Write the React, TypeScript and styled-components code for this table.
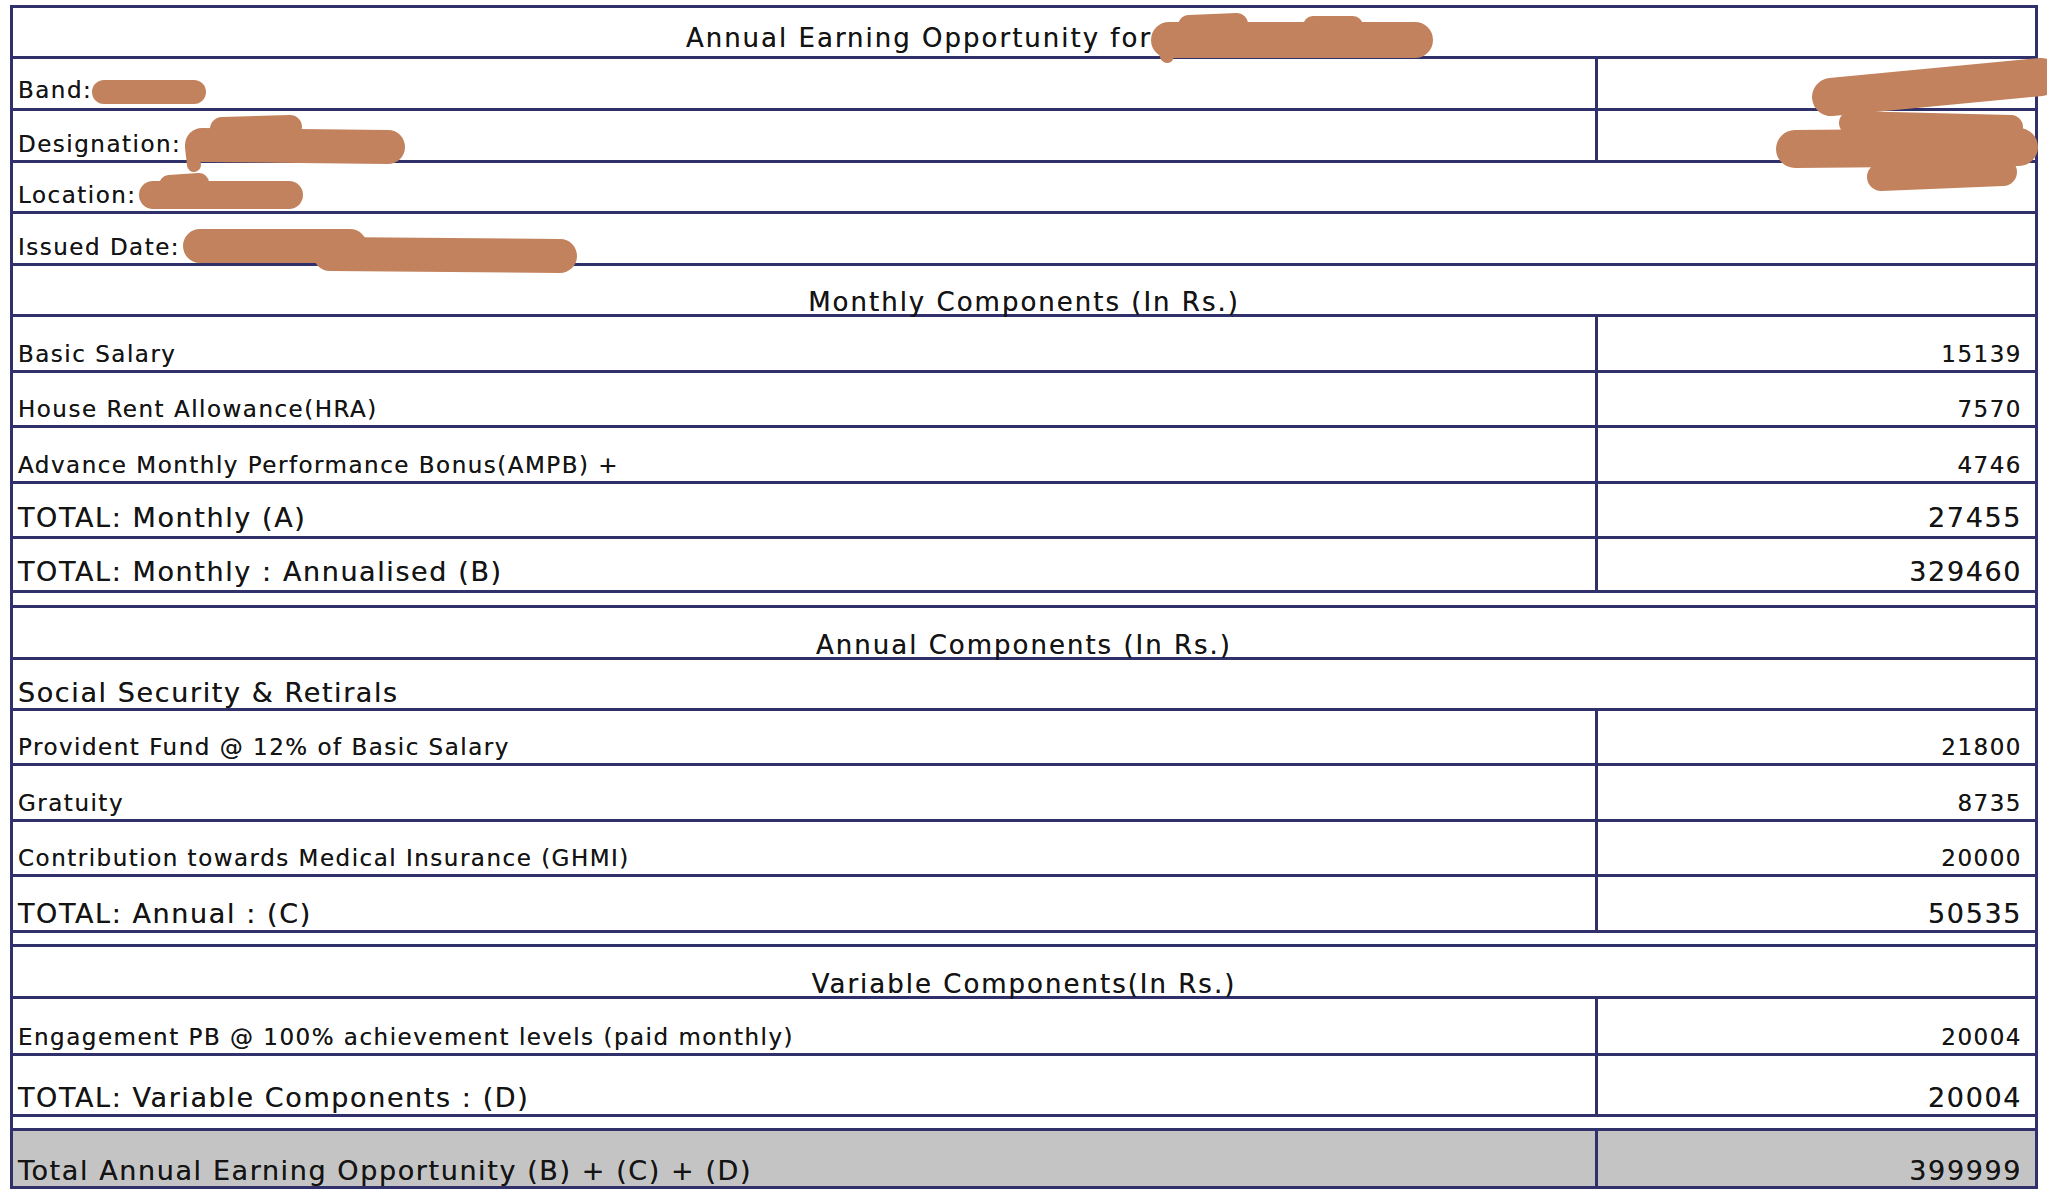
import styled, { createGlobalStyle } from "styled-components";

const GlobalStyle = createGlobalStyle`
  html, body {
    margin: 0;
    background: #fff;
    overflow: hidden;
  }
  body {
    font-family: "DejaVu Sans", Verdana, sans-serif;
    color: #141414;
  }
`;

const Sheet = styled.table`
  margin: 5px 0 0 10px;
  width: 2028px;
  table-layout: fixed;
  border-collapse: collapse;
`;

type Size = "sm" | "lg" | "hd";

const fonts = {
  sm: "font-size: 23px; letter-spacing: 1.5px; line-height: 1.1;",
  lg: "font-size: 27px; letter-spacing: 1.6px; line-height: 1.1;",
  hd: "font-size: 26px; letter-spacing: 2px; line-height: 0.9;",
};

const Cell = styled.td<{ $size?: Size; $num?: boolean; $h: number; $shade?: boolean; $pb?: number }>`
  position: relative;
  box-sizing: border-box;
  height: ${(p) => p.$h}px;
  border: 3px solid #30306b;
  padding: 0 ${(p) => (p.$num ? 13 : 5)}px ${(p) => p.$pb ?? 3}px 5px;
  vertical-align: bottom;
  white-space: nowrap;
  text-align: ${(p) => (p.$num ? "right" : "left")};
  background: ${(p) => (p.$shade ? "#c4c4c4" : "transparent")};
  text-shadow: 0 0 0.6px rgba(0, 0, 0, 0.6);
  ${(p) => fonts[p.$size ?? "sm"]}
`;

const HeadCell = styled(Cell)`
  text-align: center;
`;

const Gap = styled.td<{ $h: number }>`
  box-sizing: border-box;
  height: ${(p) => p.$h}px;
  border: 3px solid #30306b;
  padding: 0;
  font-size: 0;
`;

const NameSlot = styled.span`
  display: inline-block;
  width: 210px;
`;

const Blot = styled.svg`
  position: absolute;
  z-index: 1;
  pointer-events: none;
`;

// marker scribbles over personal details: [x1, y1, x2, y2, thickness]
type Stroke = [number, number, number, number, number];

const Scribble = ({ x, y, w, h, strokes }: { x: number; y: number; w: number; h: number; strokes: Stroke[] }) => (
  <Blot style={{ left: x, top: y }} width={w} height={h} viewBox={`0 0 ${w} ${h}`}>
    {strokes.map(([x1, y1, x2, y2, t], i) => (
      <line key={i} x1={x1} y1={y1} x2={x2} y2={y2} stroke="#c3825e" strokeWidth={t} strokeLinecap="round" />
    ))}
  </Blot>
);

const Spacer = ({ h }: { h: number }) => (
  <tr>
    <Gap colSpan={2} $h={h} />
  </tr>
);

const Heading = ({ text, h }: { text: string; h: number }) => (
  <tr>
    <HeadCell colSpan={2} $size="hd" $h={h} $pb={0}>
      {text}
    </HeadCell>
  </tr>
);

type ItemProps = { label: string; value: string; size?: Size; h: number; shade?: boolean; pb?: number };

const Item = ({ label, value, size = "sm", h, shade, pb }: ItemProps) => (
  <tr>
    <Cell $size={size} $h={h} $shade={shade} $pb={pb}>
      {label}
    </Cell>
    <Cell $size={size} $h={h} $shade={shade} $pb={pb} $num>
      {value}
    </Cell>
  </tr>
);

export default function App() {
  return (
    <>
      <GlobalStyle />
      <Sheet>
        <colgroup>
          <col style={{ width: 1585 }} />
          <col />
        </colgroup>
        <tbody>
          <tr>
            <HeadCell colSpan={2} $size="hd" $h={51} $pb={6}>
              Annual Earning Opportunity for<NameSlot />
              <Scribble
                x={1132}
                y={2}
                w={290}
                h={56}
                strokes={[
                  [24, 30, 270, 30, 36],
                  [44, 16, 92, 14, 22],
                  [168, 16, 208, 16, 20],
                  [18, 32, 22, 46, 14],
                ]}
              />
            </HeadCell>
          </tr>
          <tr>
            <Cell $h={52} $pb={5}>
              Band:
              <Scribble x={77} y={18} w={120} h={32} strokes={[[14, 15, 104, 15, 24]]} />
            </Cell>
            <Cell $h={52}>
              <Scribble
                x={173}
                y={-6}
                w={276}
                h={142}
                strokes={[
                  [60, 44, 270, 24, 38],
                  [80, 70, 240, 74, 24],
                  [24, 96, 248, 94, 38],
                  [110, 124, 232, 119, 28],
                ]}
              />
            </Cell>
          </tr>
          <tr>
            <Cell $h={52}>
              Designation:
              <Scribble
                x={167}
                y={0}
                w={235}
                h={64}
                strokes={[
                  [22, 34, 208, 36, 34],
                  [42, 18, 110, 16, 24],
                  [12, 36, 14, 54, 14],
                ]}
              />
            </Cell>
            <Cell $h={52} />
          </tr>
          <tr>
            <Cell colSpan={2} $h={51}>
              Location:
              <Scribble
                x={124}
                y={8}
                w={170}
                h={40}
                strokes={[
                  [16, 24, 152, 24, 28],
                  [32, 14, 62, 12, 20],
                ]}
              />
            </Cell>
          </tr>
          <tr>
            <Cell colSpan={2} $h={52}>
              Issued Date:
              <Scribble
                x={167}
                y={10}
                w={400}
                h={54}
                strokes={[
                  [20, 22, 170, 22, 34],
                  [150, 30, 380, 32, 34],
                ]}
              />
            </Cell>
          </tr>
          <Heading text="Monthly Components (In Rs.)" h={51} />
          <Item label="Basic Salary" value="15139" h={56} />
          <Item label="House Rent Allowance(HRA)" value="7570" h={55} />
          <Item label="Advance Monthly Performance Bonus(AMPB) +" value="4746" h={56} />
          <Item label="TOTAL: Monthly (A)" value="27455" size="lg" h={55} />
          <Item label="TOTAL: Monthly : Annualised (B)" value="329460" size="lg" h={54} />
          <Spacer h={15} />
          <Heading text="Annual Components (In Rs.)" h={52} />
          <tr>
            <Cell colSpan={2} $size="lg" $h={51} $pb={0}>
              Social Security &amp; Retirals
            </Cell>
          </tr>
          <Item label="Provident Fund @ 12% of Basic Salary" value="21800" h={55} />
          <Item label="Gratuity" value="8735" h={56} />
          <Item label="Contribution towards Medical Insurance (GHMI)" value="20000" h={55} />
          <Item label="TOTAL: Annual : (C)" value="50535" size="lg" h={56} pb={1} />
          <Spacer h={14} />
          <Heading text="Variable Components(In Rs.)" h={52} />
          <Item label="Engagement PB @ 100% achievement levels (paid monthly)" value="20004" h={57} />
          <Item label="TOTAL: Variable Components : (D)" value="20004" size="lg" h={61} pb={1} />
          <Spacer h={14} />
          <Item label="Total Annual Earning Opportunity (B) + (C) + (D)" value="399999" size="lg" h={58} shade pb={0} />
        </tbody>
      </Sheet>
    </>
  );
}
